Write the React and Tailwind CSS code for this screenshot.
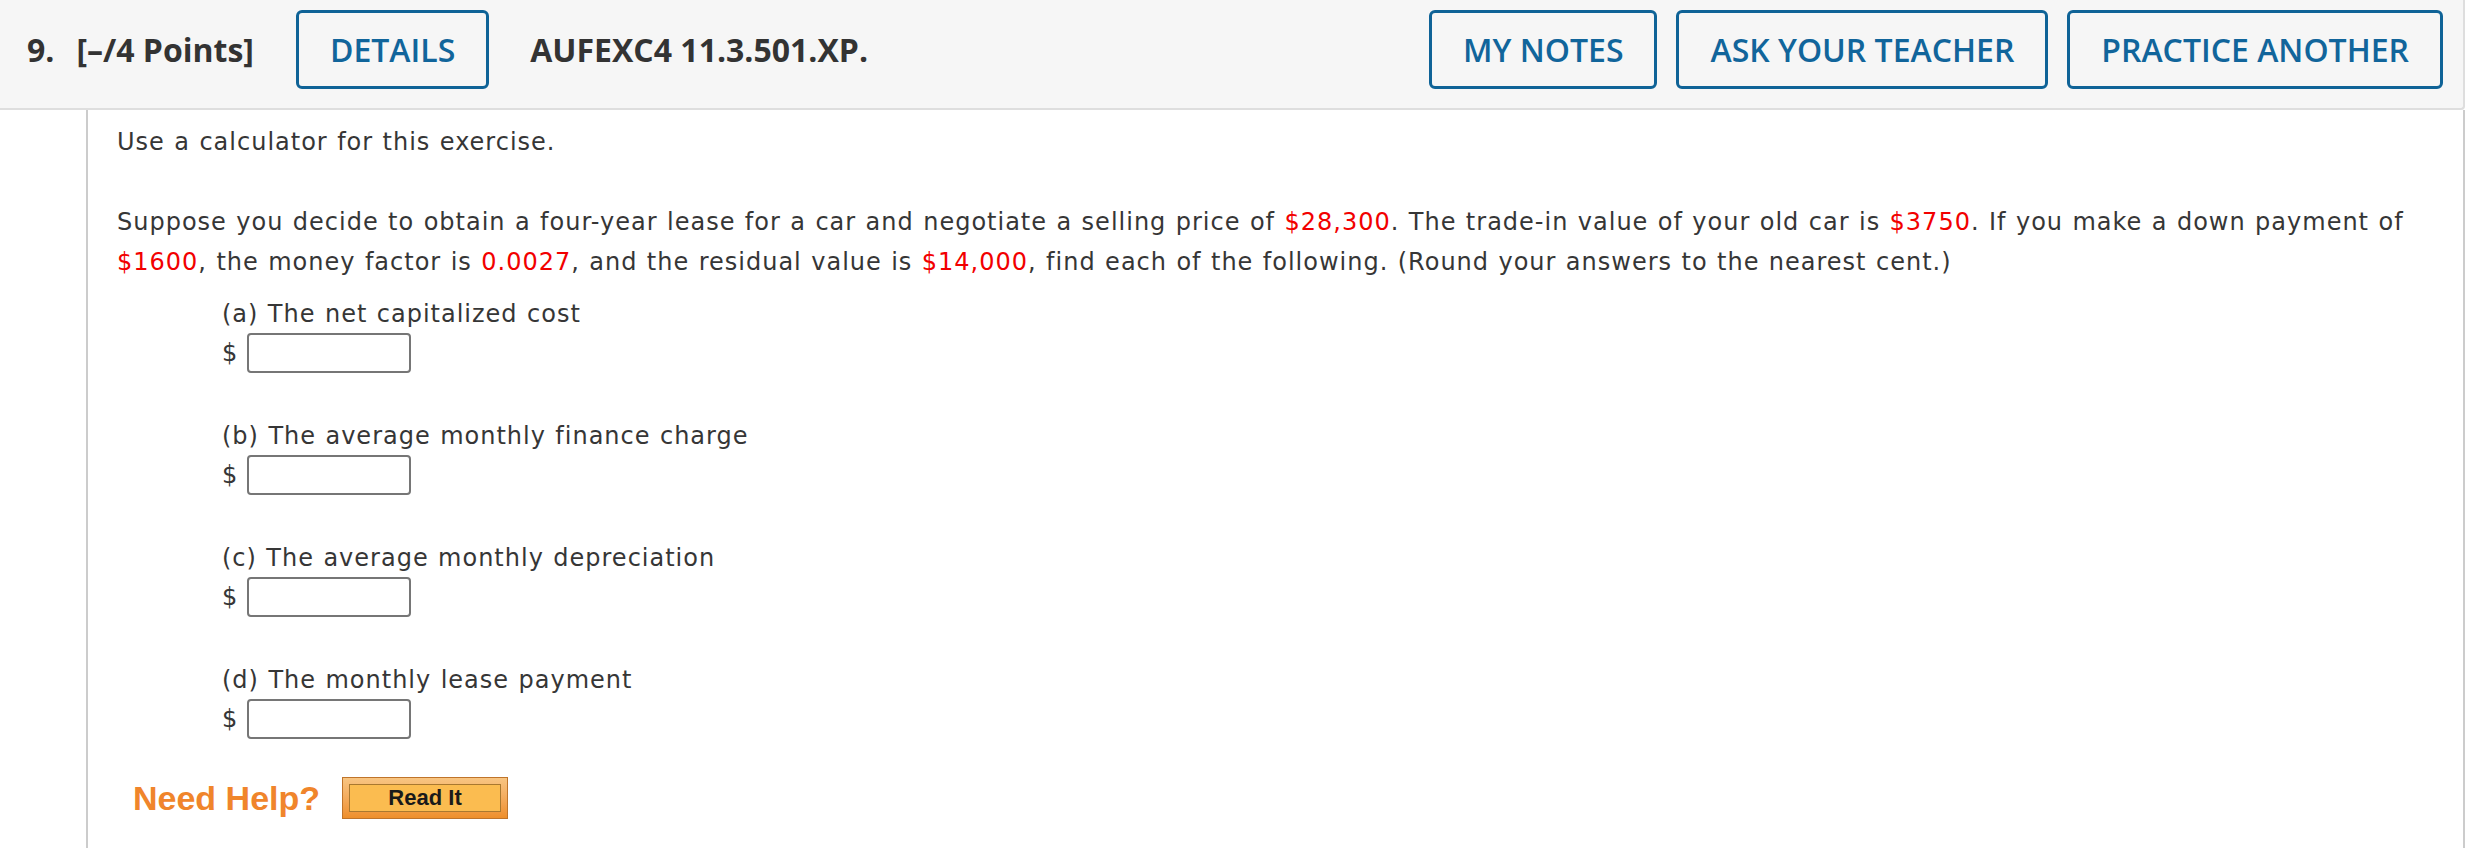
import React from 'react';

const headerFont = { fontFamily: "'Open Sans', 'Noto Sans', sans-serif" };

const HeaderButton = ({ label, className = '' }) => (
    <button
        type="button"
        className={`h-[79px] px-[31px] border-[3px] border-[#0f6397] rounded-[6px] text-[#11659b] text-[32px] font-semibold leading-none bg-transparent ${className}`}
    >
        {label}
    </button>
);

const Red = ({ children }) => <span className="text-[#f20000]">{children}</span>;

const AnswerPart = ({ label }) => (
    <div className="ml-[105px]">
        <div className="leading-[32px]">{label}</div>
        <div className="mt-[3px] flex items-center">
            <span className="leading-[40px]">$</span>
            <input
                type="text"
                className="ml-[9px] w-[164px] h-[40px] border-2 border-[#767676] rounded-[4px] bg-white outline-none"
            />
        </div>
    </div>
);

const parts = [
    '(a) The net capitalized cost',
    '(b) The average monthly finance charge',
    '(c) The average monthly depreciation',
    '(d) The monthly lease payment',
];

export default function App() {
    return (
        <div className="w-[2482px] h-[848px] overflow-hidden bg-white">
            <div className="w-[2465px]">
                {/* question header */}
                <div
                    className="flex items-center h-[110px] bg-[#f6f6f6] border-b-2 border-r-2 border-[#dedede] rounded-br-[4px] pl-[27px] pr-[20px] pb-[9px] text-[#333333]"
                    style={headerFont}
                >
                    <span className="text-[32px] font-bold leading-[40px]">9.</span>
                    <span className="ml-[22px] text-[32px] font-bold leading-[40px]">[–/4 Points]</span>
                    <HeaderButton label="DETAILS" className="ml-[42px]" />
                    <span className="ml-[41px] text-[32px] font-bold leading-[40px]">AUFEXC4 11.3.501.XP.</span>
                    <div className="ml-auto flex items-center gap-[19px]">
                        <HeaderButton label="MY NOTES" />
                        <HeaderButton label="ASK YOUR TEACHER" />
                        <HeaderButton label="PRACTICE ANOTHER" />
                    </div>
                </div>

                {/* question body */}
                <div
                    className="ml-[86px] h-[738px] border-l-2 border-r-2 border-[#cccccc] pl-[29px] pr-[20px] pt-[12px] text-[#363636] text-[24px] tracking-[1px] [word-spacing:0.8px]"
                    style={{ fontFamily: "Verdana, 'DejaVu Sans', sans-serif" }}
                >
                    <p className="leading-[40px]">Use a calculator for this exercise.</p>
                    <p className="leading-[40px] mt-[40px]">
                        Suppose you decide to obtain a four-year lease for a car and negotiate a selling price of <Red>$28,300</Red>. The trade-in value of your old car is <Red>$3750</Red>. If you make a down payment of <Red>$1600</Red>, the money factor is <Red>0.0027</Red>, and the residual value is <Red>$14,000</Red>, find each of the following. (Round your answers to the nearest cent.)
                    </p>

                    <div className="mt-[16px] flex flex-col gap-[47px]">
                        {parts.map((p) => (
                            <AnswerPart key={p} label={p} />
                        ))}
                    </div>

                    <div className="mt-[38px] ml-[16px] flex items-center tracking-normal [word-spacing:normal]">
                        <span
                            className="text-[34px] font-bold text-[#f0852b] leading-none"
                            style={{ fontFamily: "Arial, 'Liberation Sans', sans-serif" }}
                        >
                            Need Help?
                        </span>
                        <div className="ml-[22px] w-[166px] h-[42px] border border-[#bf742a] bg-linear-to-b from-[#f8c582] to-[#ee8f2a] p-[6px]">
                            <div className="w-full h-full border border-[#a9782f] bg-[#fbbc50] flex items-center justify-center">
                                <span
                                    className="text-[22px] font-bold text-[#1a1a1a] leading-none"
                                    style={{ fontFamily: "Arial, 'Liberation Sans', sans-serif" }}
                                >
                                    Read It
                                </span>
                            </div>
                        </div>
                    </div>
                </div>
            </div>
        </div>
    );
}
